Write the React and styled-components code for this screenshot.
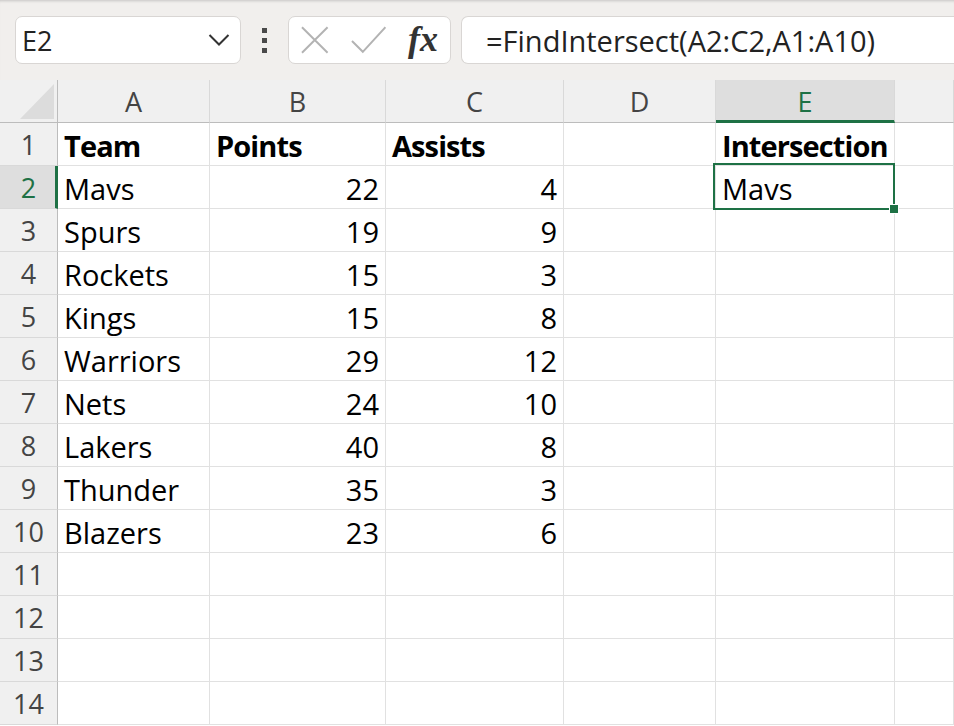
import React from "react";
import styled, { createGlobalStyle, css } from "styled-components";

const GREEN = "#1e7145";

const GlobalStyle = createGlobalStyle`
  html, body {
    margin: 0;
    padding: 0;
    background: #ffffff;
  }
  body {
    font-family: "Open Sans", "Noto Sans", sans-serif;
    overflow: hidden;
  }
`;

const Page = styled.div`
  width: 954px;
  height: 726px;
  display: flex;
  flex-direction: column;
  overflow: hidden;
`;

const Toolbar = styled.div`
  height: 80px;
  flex: none;
  box-sizing: border-box;
  padding: 16px 0 0 15px;
  display: flex;
  align-items: flex-start;
  background: #f1efed;
  box-shadow: inset 0 3px 3px -2px rgba(0, 0, 0, 0.18);
`;

const Field = styled.div`
  height: 48px;
  box-sizing: border-box;
  background: #ffffff;
  border: 1px solid #d9d6d4;
  border-radius: 7px;
  display: flex;
  align-items: center;
`;

const NameBox = styled(Field)`
  width: 226px;
  padding: 0 10px 0 6px;
  justify-content: space-between;
  font-size: 27px;
  color: #222;
`;

const Grip = styled.div`
  width: 47px;
  height: 48px;
  display: flex;
  flex-direction: column;
  align-items: center;
  justify-content: center;
  gap: 5px;

  span {
    width: 5px;
    height: 5px;
    background: #4a4a4a;
  }
`;

const ButtonBox = styled(Field)`
  width: 163px;
  padding: 0 10px 0 12px;
  gap: 22px;
`;

const Fx = styled.span`
  margin-left: auto;
  font-family: "Liberation Serif", "DejaVu Serif", serif;
  font-style: italic;
  font-weight: bold;
  font-size: 36px;
  color: #333;
  line-height: 1;
  padding: 0 2px 2px 0;
`;

const FormulaBox = styled(Field)`
  flex: 1;
  margin-left: 10px;
  border-right: none;
  border-radius: 7px 0 0 7px;
  padding-left: 24px;
  font-size: 29px;
  color: #222;
`;

const Sheet = styled.div`
  flex: 1;
  display: grid;
  grid-template-columns: 58px 152px 176px 178px 152px 179px 1fr;
  grid-auto-rows: 43px;
  font-family: "Open Sans", "Noto Sans", sans-serif;
`;

const Corner = styled.div`
  background: #f0f0f0;
  border-right: 1px solid #bcbcbc;
  border-bottom: 1px solid #bcbcbc;
  box-sizing: border-box;
  position: relative;

  &::after {
    content: "";
    position: absolute;
    left: 20px;
    top: 4px;
    width: 34px;
    height: 35px;
    background: #dcdcdc;
    clip-path: polygon(100% 0, 100% 100%, 0 100%);
  }
`;

const ColHead = styled.div`
  box-sizing: border-box;
  background: ${(p) => (p.$active ? "#dedede" : "#f0f0f0")};
  border-right: 1px solid #d9d9d9;
  border-bottom: ${(p) => (p.$active ? `3px solid ${GREEN}` : "1px solid #bcbcbc")};
  display: flex;
  align-items: center;
  justify-content: center;
  font-size: 27px;
  color: ${(p) => (p.$active ? GREEN : "#444")};
  padding-top: ${(p) => (p.$active ? "2px" : "0")};
`;

const RowHead = styled.div`
  box-sizing: border-box;
  background: ${(p) => (p.$active ? "#dedede" : "#f0f0f0")};
  border-right: ${(p) => (p.$active ? `3px solid ${GREEN}` : "1px solid #bcbcbc")};
  border-bottom: 1px solid #d9d9d9;
  display: flex;
  align-items: center;
  justify-content: center;
  font-size: 27px;
  color: ${(p) => (p.$active ? GREEN : "#444")};
  padding-left: ${(p) => (p.$active ? "2px" : "0")};
`;

const Cell = styled.div`
  position: relative;
  box-sizing: border-box;
  border-right: 1px solid #e1e1e1;
  border-bottom: 1px solid #e1e1e1;
  display: flex;
  align-items: flex-end;
  padding: 0 6px 1px 6px;
  font-size: 29px;
  line-height: 1.2;
  color: #000;
  white-space: nowrap;
  ${(p) =>
    p.$bold &&
    css`
      font-weight: 700;
      letter-spacing: -0.9px;
    `}
  ${(p) => p.$num && css`justify-content: flex-end;`}
`;

const Selection = styled.div`
  position: absolute;
  z-index: 2;
  top: -3px;
  left: -3px;
  right: -1px;
  bottom: -2px;
  border: 2px solid ${GREEN};
  pointer-events: none;

  &::after {
    content: "";
    position: absolute;
    right: -6px;
    bottom: -6px;
    width: 8px;
    height: 8px;
    background: ${GREEN};
    border: 1px solid #fff;
  }
`;

const Chevron = () => (
  <svg width="22" height="14" viewBox="0 0 22 14">
    <path d="M1.5 2 L11 11.5 L20.5 2" fill="none" stroke="#333" strokeWidth="2" />
  </svg>
);

const Cross = () => (
  <svg width="28" height="28" viewBox="0 0 28 28">
    <path d="M1 1 L27 27 M27 1 L1 27" fill="none" stroke="#b3b3b3" strokeWidth="2" />
  </svg>
);

const Check = () => (
  <svg width="36" height="28" viewBox="0 0 36 28">
    <path d="M1 15 L12 26 L35 1" fill="none" stroke="#b3b3b3" strokeWidth="2" />
  </svg>
);

const columns = ["A", "B", "C", "D", "E", ""];

const rows = [
  ["Team", "Points", "Assists", "", "Intersection"],
  ["Mavs", 22, 4, "", "Mavs"],
  ["Spurs", 19, 9],
  ["Rockets", 15, 3],
  ["Kings", 15, 8],
  ["Warriors", 29, 12],
  ["Nets", 24, 10],
  ["Lakers", 40, 8],
  ["Thunder", 35, 3],
  ["Blazers", 23, 6],
  [],
  [],
  [],
  [],
];

export default function App() {
  return (
    <Page>
      <GlobalStyle />
      <Toolbar>
        <NameBox>
          <span>E2</span>
          <Chevron />
        </NameBox>
        <Grip>
          <span />
          <span />
          <span />
        </Grip>
        <ButtonBox>
          <Cross />
          <Check />
          <Fx>fx</Fx>
        </ButtonBox>
        <FormulaBox>=FindIntersect(A2:C2,A1:A10)</FormulaBox>
      </Toolbar>

      <Sheet>
        <Corner />
        {columns.map((c, i) => (
          <ColHead key={i} $active={c === "E"}>
            {c}
          </ColHead>
        ))}
        {rows.map((row, r) => (
          <React.Fragment key={r}>
            <RowHead $active={r === 1}>{r + 1}</RowHead>
            {columns.map((_, c) => {
              const v = row[c];
              return (
                <Cell key={c} $bold={r === 0} $num={typeof v === "number"}>
                  {v}
                  {r === 1 && c === 4 && <Selection />}
                </Cell>
              );
            })}
          </React.Fragment>
        ))}
      </Sheet>
    </Page>
  );
}
